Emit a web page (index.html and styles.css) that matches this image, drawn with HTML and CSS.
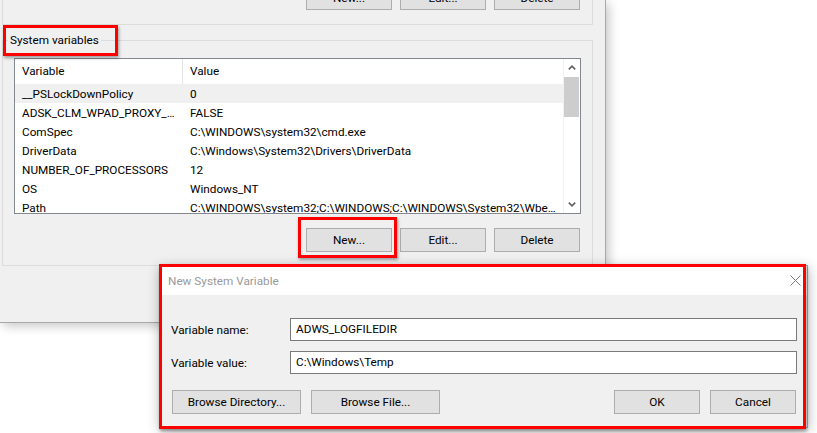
FILE: index.html
```html
<!DOCTYPE html>
<html lang="en">
<head>
  <meta charset="UTF-8">
  <title>Environment Variables - New System Variable</title>
  <link rel="stylesheet" href="styles.css">
</head>
<body>
  <div class="desk">
    <div class="env-window">
      <div class="user-group">
        <button class="btn">New...</button>
        <button class="btn">Edit...</button>
        <button class="btn">Delete</button>
      </div>

      <fieldset class="sys-group">
        <legend>System variables</legend>
        <div class="list">
          <div class="list-main">
            <div class="list-head">
              <span class="col-var">Variable</span>
              <span class="col-val">Value</span>
            </div>
            <div class="list-row selected">
              <span class="col-var">__PSLockDownPolicy</span>
              <span class="col-val">0</span>
            </div>
            <div class="list-row">
              <span class="col-var">ADSK_CLM_WPAD_PROXY_CHECK</span>
              <span class="col-val">FALSE</span>
            </div>
            <div class="list-row">
              <span class="col-var">ComSpec</span>
              <span class="col-val">C:\WINDOWS\system32\cmd.exe</span>
            </div>
            <div class="list-row">
              <span class="col-var">DriverData</span>
              <span class="col-val">C:\Windows\System32\Drivers\DriverData</span>
            </div>
            <div class="list-row">
              <span class="col-var">NUMBER_OF_PROCESSORS</span>
              <span class="col-val">12</span>
            </div>
            <div class="list-row">
              <span class="col-var">OS</span>
              <span class="col-val">Windows_NT</span>
            </div>
            <div class="list-row">
              <span class="col-var">Path</span>
              <span class="col-val">C:\WINDOWS\system32;C:\WINDOWS;C:\WINDOWS\System32\Wbem;C:\WINDOWS\System32\WindowsPowerShell\v1.0\</span>
            </div>
          </div>
          <div class="scrollbar">
            <div class="sb-arrow">
              <svg width="8" height="5" viewBox="0 0 8 5"><path d="M0.8 4.4 L4 1.2 L7.2 4.4" fill="none" stroke="#606060" stroke-width="1.6"/></svg>
            </div>
            <div class="sb-track"><div class="sb-thumb"></div></div>
            <div class="sb-arrow">
              <svg width="8" height="5" viewBox="0 0 8 5"><path d="M0.8 0.6 L4 3.8 L7.2 0.6" fill="none" stroke="#606060" stroke-width="1.6"/></svg>
            </div>
          </div>
        </div>
        <div class="btn-row">
          <button class="btn">New...</button>
          <button class="btn">Edit...</button>
          <button class="btn">Delete</button>
        </div>
      </fieldset>
    </div>

    <div class="dialog">
      <div class="dialog-title">
        <span>New System Variable</span>
        <svg class="close-x" width="11" height="11" viewBox="0 0 11 11"><path d="M0.5 0.5 L10.5 10.5 M10.5 0.5 L0.5 10.5" stroke="#7a7a7a" stroke-width="1"/></svg>
      </div>
      <div class="dialog-body">
        <div class="field">
          <label>Variable name:</label>
          <div class="input">ADWS_LOGFILEDIR</div>
        </div>
        <div class="field">
          <label>Variable value:</label>
          <div class="input">C:\Windows\Temp</div>
        </div>
        <div class="dialog-buttons">
          <button class="btn wide">Browse Directory...</button>
          <button class="btn wide">Browse File...</button>
          <span class="spacer"></span>
          <button class="btn">OK</button>
          <button class="btn">Cancel</button>
        </div>
      </div>
    </div>

    <!-- red annotation boxes -->
    <div class="mark mark-legend"></div>
    <div class="mark mark-new"></div>
    <div class="mark mark-dialog"></div>
  </div>
</body>
</html>
```

FILE: styles.css
```css
* {
  box-sizing: border-box;
}

body {
  margin: 0;
  background: #fff;
  font-family: Roboto, 'Liberation Sans', sans-serif;
  font-size: 11.75px;
  color: #000;
}

.desk {
  position: relative;
  width: 817px;
  height: 433px;
  overflow: hidden;
}

/* background window */
.env-window {
  width: 606px;
  height: 323px;
  padding-left: 2px;
  background: #f0f0f0;
  border-right: 1px solid #a8a8a8;
  border-bottom: 1px solid #a8a8a8;
  box-shadow: 3px 3px 10px rgba(0,0,0,0.22);
  overflow: hidden;
}

.btn {
  width: 86px;
  height: 24px;
  padding: 0;
  margin: 0;
  border: 1px solid #adadad;
  background: #e1e1e1;
  font-family: inherit;
  font-size: 11.75px;
  color: #000;
  flex-shrink: 0;
}

.user-group {
  width: 591px;
  height: 25px;
  border: 1px solid #dcdcdc;
  border-top: none;
  display: flex;
  align-items: flex-end;
  justify-content: flex-end;
  gap: 8px;
  padding: 0 12px 14px 0;
}

.sys-group {
  width: 591px;
  margin: 7px 0 0 0;
  padding: 10px 11px 13px 11px;
  border: 1px solid #dcdcdc;
  min-width: 0;
}

.sys-group legend {
  margin-left: -6px;
  padding: 0 2px;
  line-height: 16px;
}

.list {
  display: flex;
  height: 156px;
  border: 1px solid #828790;
  background: #fff;
}

.list-main {
  flex: 1;
  min-width: 0;
  overflow: hidden;
}

.list-head,
.list-row {
  display: flex;
  white-space: nowrap;
}

.list-head {
  height: 25px;
  line-height: 25px;
}

.list-row {
  height: 19px;
  line-height: 20px;
}

.list-row.selected {
  background: #f0f0f0;
}

.col-var {
  width: 168px;
  padding: 0 6px 0 7px;
  overflow: hidden;
  text-overflow: ellipsis;
  flex-shrink: 0;
}

.list-head .col-var {
  border-right: 1px solid #e5e5e5;
}

.col-val {
  flex: 1;
  min-width: 0;
  padding: 0 4px 0 7px;
  overflow: hidden;
  text-overflow: ellipsis;
}

.scrollbar {
  width: 17px;
  display: flex;
  flex-direction: column;
  background: #fff;
  border-left: 1px solid #f0f0f0;
}

.sb-arrow {
  height: 17px;
  display: flex;
  align-items: center;
  justify-content: center;
}

.sb-track {
  flex: 1;
  padding: 1px 1px 0 0;
}

.sb-thumb {
  height: 40px;
  background: #cdcdcd;
}

.btn-row {
  display: flex;
  justify-content: flex-end;
  gap: 8px;
  margin-top: 14px;
  padding-right: 1px;
}

/* dialog */
.dialog {
  position: absolute;
  left: 160px;
  top: 265px;
  width: 648px;
  height: 163px;
  border: 1px solid #9c9c9c;
  background: #f0f0f0;
  box-shadow: 0 3px 12px rgba(0,0,0,0.3);
}

.dialog-title {
  height: 29px;
  background: #fff;
  display: flex;
  align-items: center;
  justify-content: space-between;
  padding: 0 6px 0 7px;
  color: #999;
}

.dialog-body {
  padding: 23px 10px 0 10px;
}

.field {
  display: flex;
  align-items: center;
  height: 23px;
  margin-bottom: 10px;
}

.field label {
  width: 119px;
  flex-shrink: 0;
}

.input {
  flex: 1;
  height: 23px;
  line-height: 21px;
  padding-left: 5px;
  border: 1px solid #7a7a7a;
  background: #fff;
}

.dialog-buttons {
  display: flex;
  gap: 10px;
  margin-top: 16px;
  padding: 0 1px;
}

.dialog-buttons .btn.wide {
  width: 129px;
}

.spacer {
  flex: 1;
}

/* red annotation boxes */
.mark {
  position: absolute;
  border: 3px solid #f00;
  box-shadow: 1px 2px 3px rgba(0,0,0,0.35);
  pointer-events: none;
}

.mark-legend {
  left: 3px;
  top: 25px;
  width: 115px;
  height: 31px;
}

.mark-new {
  left: 298px;
  top: 217px;
  width: 99px;
  height: 41px;
}

.mark-dialog {
  left: 159px;
  top: 264px;
  width: 647px;
  height: 165px;
}
```
